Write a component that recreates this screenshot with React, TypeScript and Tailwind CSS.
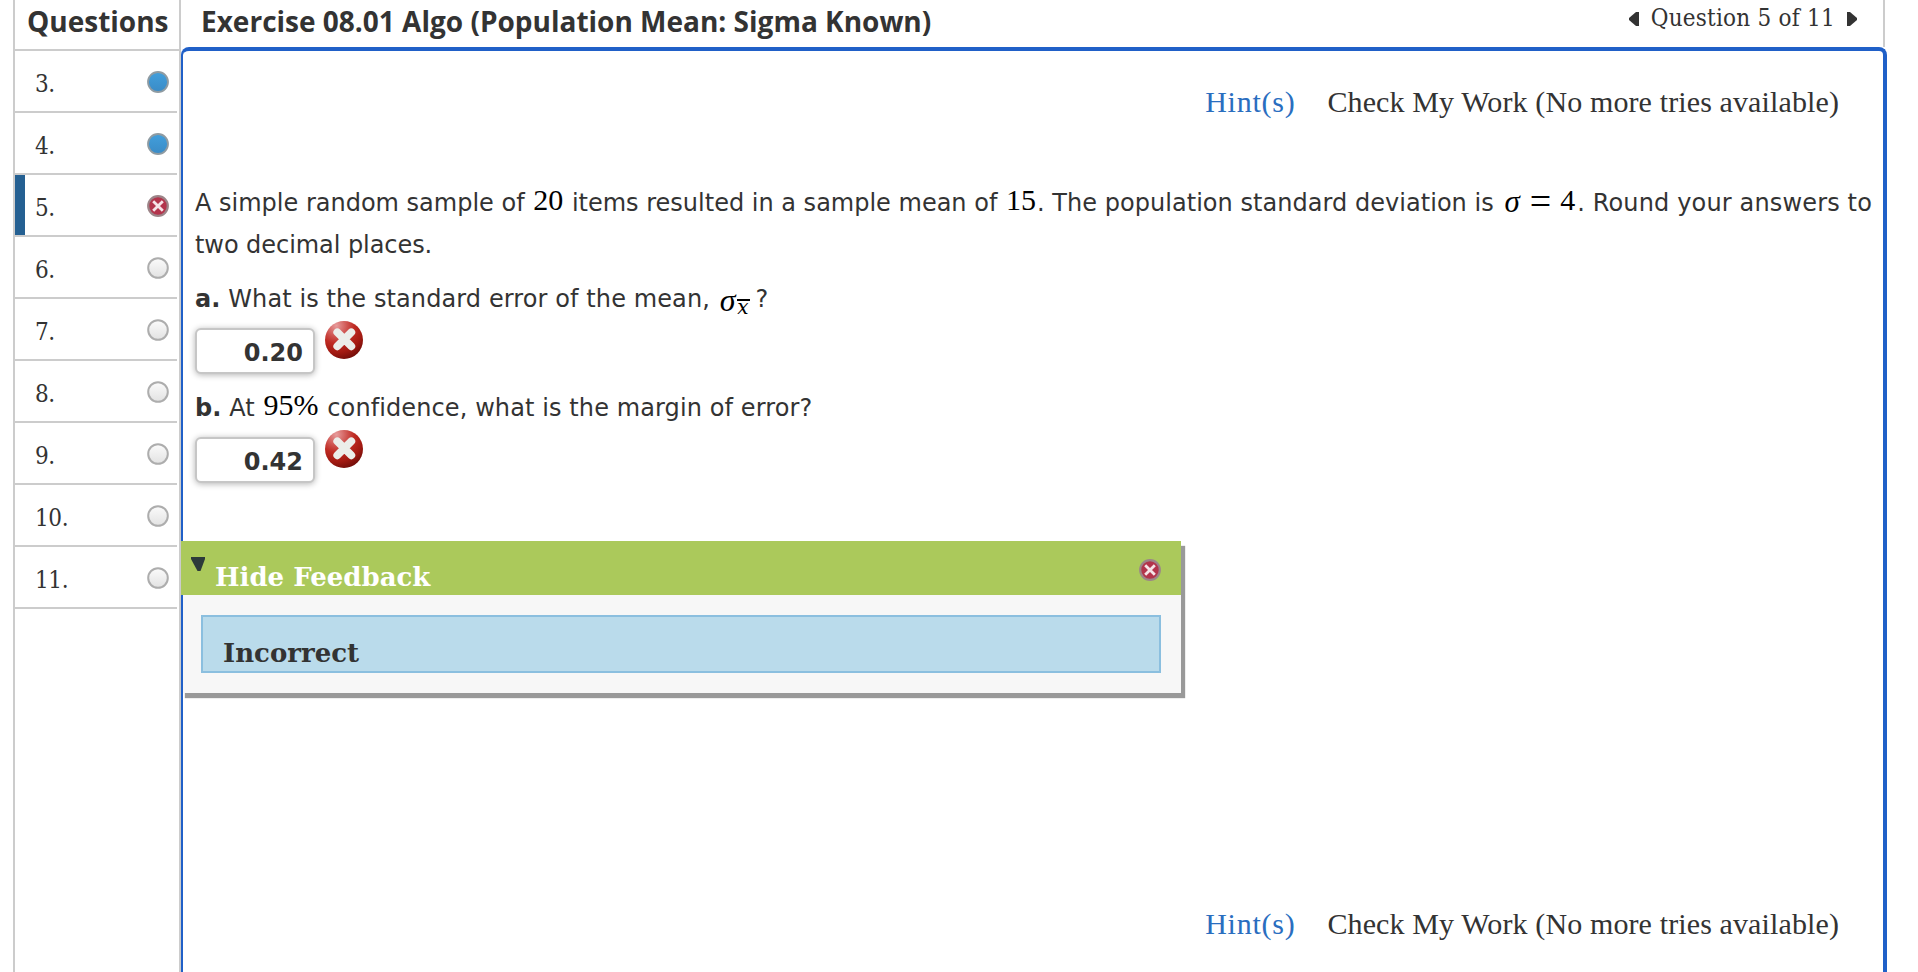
import React from 'react';

type Status = 'saved' | 'wrong' | 'empty';

const questions: { id: number; status: Status }[] = [
    { id: 3, status: 'saved' },
    { id: 4, status: 'saved' },
    { id: 5, status: 'wrong' },
    { id: 6, status: 'empty' },
    { id: 7, status: 'empty' },
    { id: 8, status: 'empty' },
    { id: 9, status: 'empty' },
    { id: 10, status: 'empty' },
    { id: 11, status: 'empty' },
];

const StatusDot: React.FC<{ status: Status }> = ({ status }) => (
    <svg className="block h-[22px] w-[22px]" viewBox="0 0 22 22">
        <defs>
            <linearGradient id="dot-saved" x1="0" y1="0" x2="0" y2="1">
                <stop offset="0" stopColor="#429fdc" />
                <stop offset="1" stopColor="#3a8bc6" />
            </linearGradient>
            <linearGradient id="dot-empty" x1="0" y1="0" x2="0" y2="1">
                <stop offset="0" stopColor="#fbfbfb" />
                <stop offset="1" stopColor="#e2e2e2" />
            </linearGradient>
        </defs>
        {status === 'saved' && <circle cx="11" cy="11" r="10" fill="url(#dot-saved)" stroke="#8f9ba2" strokeWidth="1.8" />}
        {status === 'empty' && <circle cx="11" cy="11" r="9.8" fill="url(#dot-empty)" stroke="#adadad" strokeWidth="2" />}
        {status === 'wrong' && (
            <>
                <circle cx="11" cy="11" r="9.8" fill="#b3344c" stroke="#9c8488" strokeWidth="2.2" />
                <path d="M6.2 6.2l9.6 9.6M15.8 6.2l-9.6 9.6" stroke="#f6e3e8" strokeWidth="2.8" />
            </>
        )}
    </svg>
);

const WrongMark: React.FC = () => (
    <svg className="block h-[38px] w-[38px]" viewBox="0 0 38 38">
        <defs>
            <radialGradient id="ball" cx="0.3" cy="0.12" r="0.95">
                <stop offset="0" stopColor="#e79c9c" />
                <stop offset="0.3" stopColor="#cf5450" />
                <stop offset="0.5" stopColor="#be2a22" />
                <stop offset="0.75" stopColor="#a31a12" />
                <stop offset="1" stopColor="#6d0c08" />
            </radialGradient>
        </defs>
        <circle cx="19" cy="19" r="19" fill="url(#ball)" />
        <path d="M12.3 11.3l14 14M26.3 11.3l-14 14" stroke="#eceeea" strokeWidth="7.8" strokeLinecap="round" />
    </svg>
);

const Answer: React.FC<{ value: string }> = ({ value }) => (
    <div className="flex h-[54px]">
        <div className="mt-2 flex h-[46px] w-[120px] items-center justify-end rounded-md border-2 border-[#c6c6c6] bg-white pr-2.5 text-2xl font-bold shadow-[0_1px_6px_rgba(0,0,0,0.3)]">
            <span className="mt-1">{value}</span>
        </div>
        <div className="mt-px ml-[10px]">
            <WrongMark />
        </div>
    </div>
);

const Num: React.FC<{ children: React.ReactNode }> = ({ children }) => (
    <span className="mr-px ml-px align-[1px] font-['Liberation_Serif',serif] text-[30px] leading-none tracking-normal text-black">
        {children}
    </span>
);

const WorkLinks: React.FC = () => (
    <div className="flex h-10 items-center justify-end gap-8 pr-11 font-['Liberation_Serif',serif] text-[30px]">
        <span className="tracking-[0.75px] text-[#2a6ebf]">Hint(s)</span>
        <span className="tracking-[0.12px]">Check My Work (No more tries available)</span>
    </div>
);

export default function App() {
    return (
        <div className="flex h-[972px] w-[1918px] overflow-hidden bg-white pl-[13px] text-[#333]">
            <aside className="w-[168px] shrink-0 border-x-2 border-[#ccc]">
                <h2 className="h-[51px] border-b-2 border-[#ccc] pl-3 font-['Open_Sans',sans-serif] text-[28px] leading-[43px] font-bold">
                    Questions
                </h2>
                {questions.map(({ id, status }) => (
                    <div key={id} className="mr-0.5 flex h-[62px] items-center border-b-2 border-[#ccc] pr-2">
                        <div className={status === 'wrong' ? 'h-[60px] w-2.5 bg-[#246092]' : 'h-[60px] w-2.5'} />
                        <span className="mt-1.5 ml-2.5 grow font-['DejaVu_Serif_Condensed','DejaVu_Serif',serif] text-2xl tracking-[-0.4px] [font-stretch:condensed]">
                            {id}.
                        </span>
                        <div className="mt-0.5">
                            <StatusDot status={status} />
                        </div>
                    </div>
                ))}
            </aside>

            <main className="flex w-[1706px] shrink-0 flex-col">
                <header className="mr-0.5 flex h-[47px] justify-between border-r-2 border-[#ccc] pl-5">
                    <h1 className="font-['Open_Sans',sans-serif] text-[28px] leading-[43px] font-bold">
                        Exercise 08.01 Algo (Population Mean: Sigma Known)
                    </h1>
                    <div className="flex h-[36px] items-center gap-3 pr-[26px] font-['DejaVu_Serif_Condensed','DejaVu_Serif',serif] text-2xl tracking-[0.22px] [font-stretch:condensed]">
                        <svg className="mt-0.5 h-3.5 w-2.5" viewBox="0 0 10 14"><path d="M10 0H7L0 6v2l7 6h3z" fill="#333" /></svg>
                        <span>Question 5 of 11</span>
                        <svg className="mt-0.5 h-3.5 w-2.5" viewBox="0 0 10 14"><path d="M0 0h3l7 6v2l-7 6H0z" fill="#333" /></svg>
                    </div>
                </header>

                <section className="grow rounded-t-lg border-t-4 border-r-4 border-l-2 border-[#2060c8] font-['DejaVu_Sans',sans-serif] text-2xl">
                    <div className="pt-[31px]">
                        <WorkLinks />
                    </div>
                    <div className="pt-[60px] pl-3">
                        <p className="h-[84px] leading-[42px] whitespace-nowrap">
                            A simple random sample of <Num>20</Num> items resulted in a sample mean of <Num>15</Num>
                            <span className="tracking-[0.04px]">. The population standard deviation is </span>
                            <Num>
                                <i className="ml-0.5 align-[-2px] text-[31px] leading-[0]">σ</i>
                                <span className="mr-[9px] ml-2.5 align-[-4px] text-[38px] leading-[0]">=</span>4
                            </Num>
                            <span className="ml-px tracking-[0.15px]">. Round your answers to</span>
                            <br />
                            <span className="tracking-[-0.06px]">two decimal places.</span>
                        </p>
                        <p className="mt-3 h-[42px] leading-[42px] tracking-[0.1px]">
                            <b>a.</b> What is the standard error of the mean,{' '}
                            <span className="mr-px ml-0.5 align-[-4px] font-['Liberation_Serif',serif] text-[32px] leading-none text-black italic">σ</span>
                            <span className="relative top-[7px] inline-block w-[13px] border-t-2 border-black text-center font-['DejaVu_Serif',serif] text-xl leading-[12px] text-black italic">
                                x
                            </span>
                            <span className="ml-1.5">?</span>
                        </p>
                        <Answer value="0.20" />
                        <p className="mt-[13px] h-[42px] leading-[42px] tracking-[0.1px]">
                            <b>b.</b> At <Num>95%</Num> confidence, what is the margin of error?
                        </p>
                        <Answer value="0.42" />
                    </div>

                    <div className="mt-[58px] -ml-0.5 w-[1000px] shadow-[4px_5px_1px_#999]">
                        <div className="flex h-[54px] bg-[#abc95b]">
                            <svg className="mt-4 ml-2.5 h-3.5 w-3.5" viewBox="0 0 14 14"><path d="M0 0h14v2L9.5 14h-3L0 2z" fill="#2c3a3a" /></svg>
                            <span className="mt-4 ml-2.5 grow font-['DejaVu_Serif',serif] text-[26px] leading-[40px] font-bold text-white">
                                Hide Feedback
                            </span>
                            <div className="mt-[18px] mr-5"><StatusDot status="wrong" /></div>
                        </div>
                        <div className="ml-0.5 h-[98px] bg-[#f7f7f7] px-[18px] pt-5">
                            <div className="h-[58px] w-[960px] border-2 border-[#8bbfdf] bg-[#badbeb] pt-4 pl-5 font-['DejaVu_Serif',serif] text-[26px] leading-[40px] font-bold">
                                Incorrect
                            </div>
                        </div>
                    </div>

                    <div className="mt-[211px]">
                        <WorkLinks />
                    </div>
                </section>
            </main>
        </div>
    );
}
